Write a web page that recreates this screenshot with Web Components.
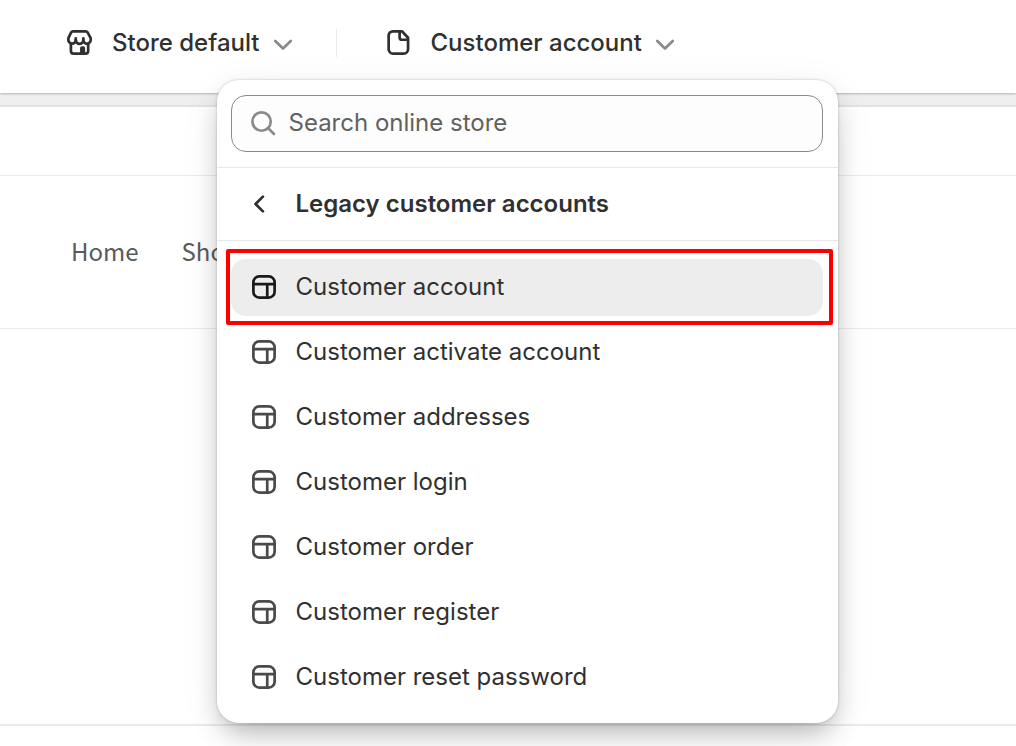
<!DOCTYPE html>
<html lang="en">
<head>
<meta charset="utf-8">
<meta name="viewport" content="width=device-width, initial-scale=1">
<title>Online store editor</title>
<style>
  body {
    margin: 0;
    min-height: 100vh;
    display: flex;
    flex-direction: column;
    background: #efefef;
    color: #303030;
    font: 400 24px/36px Inter, "Liberation Sans", sans-serif;
  }
  store-preview { flex: 1; }
</style>
</head>
<body>
<editor-bar>
  <bar-menu icon="store" label="Store default"></bar-menu>
  <bar-menu icon="page" label="Customer account" open>
    <template-picker heading="Legacy customer accounts">
      <template-item selected>Customer account</template-item>
      <template-item>Customer activate account</template-item>
      <template-item>Customer addresses</template-item>
      <template-item>Customer login</template-item>
      <template-item>Customer order</template-item>
      <template-item>Customer register</template-item>
      <template-item>Customer reset password</template-item>
    </template-picker>
  </bar-menu>
</editor-bar>
<store-preview>
  <a href="#home">Home</a>
  <a href="#shop">Shop</a>
</store-preview>

<script>
const icons = {
  store: `<path d="M6.6 3.5h7.2c.4 0 .7.2.9.5l1.8 3.3v.9a2.05 2.05 0 0 1-4.1.2 2.1 2.1 0 0 1-4.2 0 2.05 2.05 0 0 1-4.1-.2v-.9L5.7 4c.2-.3.5-.5.9-.5z"/>
    <path d="M5.5 10.6v3.7c0 .9.6 1.6 1.5 1.6h6.6c.9 0 1.5-.7 1.5-1.6v-3.7M8.2 7.4v1M12.4 7.4v1"/>
    <path d="M11 15.6v-2.8c0-.4.2-.6.6-.6h.8c.4 0 .6.2.6.6v2.8z" fill="currentColor" stroke-width=".8"/>`,
  page: `<path d="M12.2 3.5H7.2a2.4 2.4 0 0 0-2.4 2.4v7.6a2.4 2.4 0 0 0 2.4 2.4h6a2.4 2.4 0 0 0 2.4-2.4V7.1z"/>
    <path d="M10.9 3.7v3.2c0 .8.5 1.3 1.3 1.3h3.2"/>`,
  down: '<path d="M5.7 8.9l4.3 4.2 4.3-4.2"/>',
  back: '<path d="M9.4 5.9L5.3 10l4.1 4.1"/>',
  search: '<circle cx="9.2" cy="9.2" r="5.1"/><path d="M13 13l3.1 3.1"/>',
  template: `<rect x="4.1" y="4.1" width="11.8" height="11.8" rx="3.3"/>
    <path d="M4.1 8.4h11.8M11.8 8.4v7.5"/>`
};

function attach(element, html) {
  const tmpl = document.createElement('template');
  tmpl.innerHTML = html;
  element.attachShadow({ mode: 'open' }).appendChild(tmpl.content.cloneNode(true));
}

class EditorIcon extends HTMLElement {
  constructor() {
    super();
    attach(this, `
      <style>
        :host { display: block; flex: none; width: 36px; height: 36px; }
        svg { display: block; width: 100%; height: 100%; fill: none; stroke: currentColor;
          stroke-width: 1.5; stroke-linecap: round; stroke-linejoin: round; }
      </style>
      <svg viewBox="0 0 20 20" aria-hidden="true"></svg>
    `);
  }

  connectedCallback() {
    this.shadowRoot.querySelector('svg').innerHTML = icons[this.getAttribute('name')];
  }
}

class EditorBar extends HTMLElement {
  constructor() {
    super();
    attach(this, `
      <style>
        :host {
          display: flex;
          position: relative;
          z-index: 1;
          padding: 25px 61px 32px;
          background: #fff;
          box-shadow: 0 1px 2px rgba(0, 0, 0, .25);
        }
        ::slotted(:not(:first-child)) {
          padding-left: 44px;
          margin-left: 35px;
          background: linear-gradient(#ebebeb, #ebebeb) left / 1px 28px no-repeat;
        }
      </style>
      <slot></slot>
    `);
  }
}

class BarMenu extends HTMLElement {
  constructor() {
    super();
    attach(this, `
      <style>
        :host { display: block; }
        .anchor { position: relative; }
        button {
          display: flex;
          align-items: center;
          padding: 0;
          border: 0;
          background: none;
          color: inherit;
          font: inherit;
          font-weight: 500;
          white-space: nowrap;
        }
        .label { margin: 0 5px 0 15px; }
        .down { color: #8a8a8a; }
        .popover {
          position: absolute;
          top: 55px;
          left: -163px;
        }
      </style>
      <div class="anchor">
        <button type="button" aria-haspopup="true">
          <editor-icon name="${this.getAttribute('icon')}"></editor-icon>
          <span class="label">${this.getAttribute('label')}</span>
          <editor-icon class="down" name="down"></editor-icon>
        </button>
        <div class="popover"><slot></slot></div>
      </div>
    `);
    this.shadowRoot.querySelector('button').setAttribute('aria-expanded', this.hasAttribute('open'));
    this.shadowRoot.querySelector('.popover').hidden = !this.hasAttribute('open');
  }
}

class TemplatePicker extends HTMLElement {
  constructor() {
    super();
    attach(this, `
      <style>
        :host {
          display: block;
          width: 621px;
          border-radius: 22px;
          background: #fff;
          box-shadow:
            0 0 2px 1px rgba(0, 0, 0, .1),
            0 14px 28px -7px rgba(0, 0, 0, .3),
            0 8px 44px rgba(0, 0, 0, .06);
        }
        .search { padding: 15px 15px 15px 14px; border-bottom: 1px solid #e8e8e8; }
        label {
          display: flex;
          align-items: center;
          gap: 8px;
          box-sizing: border-box;
          height: 57px;
          padding: 0 13px 2px;
          border: 1px solid #8a8a8a;
          border-radius: 15px;
          background: #fdfdfd;
          color: #8a8a8a;
        }
        input {
          flex: 1;
          min-width: 0;
          padding: 0;
          border: 0;
          outline: 0;
          background: none;
          color: #303030;
          font: inherit;
        }
        input::placeholder { color: #616161; opacity: 1; }
        header {
          display: flex;
          align-items: center;
          gap: 14px;
          padding: 18px 29px;
          border-bottom: 1px solid #e8e8e8;
        }
        button { padding: 0; border: 0; background: none; color: inherit; }
        h2 { margin: 0; font: inherit; font-weight: 600; }
        .list {
          display: flex;
          flex-direction: column;
          gap: 8px;
          padding: 18px 15px 17px 14px;
        }
      </style>
      <div class="search">
        <label>
          <editor-icon name="search"></editor-icon>
          <input type="text" placeholder="Search online store" aria-label="Search online store">
        </label>
      </div>
      <header>
        <button type="button" aria-label="Back"><editor-icon name="back"></editor-icon></button>
        <h2>${this.getAttribute('heading')}</h2>
      </header>
      <div class="list"><slot></slot></div>
    `);
  }
}

class TemplateItem extends HTMLElement {
  constructor() {
    super();
    attach(this, `
      <style>
        :host { display: block; position: relative; }
        button {
          display: flex;
          align-items: center;
          gap: 14px;
          width: 100%;
          height: 57px;
          padding: 0 15px 2px;
          border: 0;
          border-radius: 15px;
          background: none;
          color: inherit;
          font: inherit;
          text-align: left;
        }
        editor-icon { color: #4a4a4a; }
        :host([selected]) button { background: #ededed; }
        :host([selected]) editor-icon { color: #1a1a1a; }
        :host([selected])::after {
          content: "";
          position: absolute;
          inset: -10px -10px -9px -5px;
          border: 4px solid #f00;
          border-radius: 2px;
          pointer-events: none;
        }
      </style>
      <button type="button">
        <editor-icon name="template"></editor-icon>
        <span><slot></slot></span>
      </button>
    `);
  }
}

class StorePreview extends HTMLElement {
  constructor() {
    super();
    attach(this, `
      <style>
        :host {
          display: flex;
          flex-direction: column;
          margin-top: 12px;
          border-top: 2px solid #e3e3e3;
          background: #fff;
        }
        .announcement { height: 68px; border-bottom: 1px solid #ebebeb; }
        nav {
          display: flex;
          gap: 43px;
          padding: 57px 71px 59px;
          border-bottom: 1px solid #ebebeb;
          font-family: "Noto Sans CJK JP", "Noto Sans", sans-serif;
        }
        ::slotted(a) { color: #5a5a5a; text-decoration: none; }
        main { flex: 1; }
        footer { height: 20px; border-top: 2px solid #ebebeb; }
      </style>
      <div class="announcement"></div>
      <nav><slot></slot></nav>
      <main></main>
      <footer></footer>
    `);
  }
}

customElements.define('editor-icon', EditorIcon);
customElements.define('editor-bar', EditorBar);
customElements.define('bar-menu', BarMenu);
customElements.define('template-picker', TemplatePicker);
customElements.define('template-item', TemplateItem);
customElements.define('store-preview', StorePreview);
</script>
</body>
</html>
